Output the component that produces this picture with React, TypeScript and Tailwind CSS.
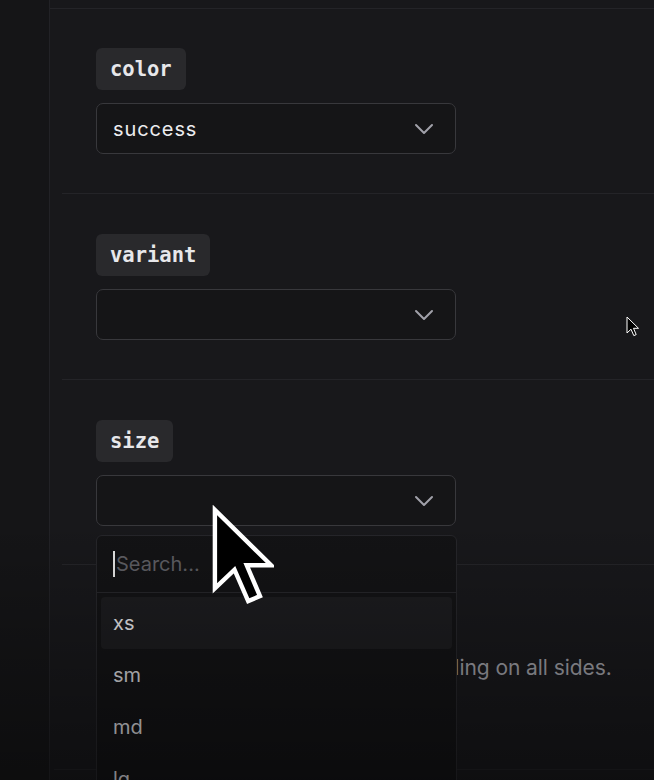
import React from "react";

const Chevron = () => (
  <svg width="20" height="12" viewBox="0 0 20 12" fill="none" className="shrink-0">
    <path d="M2 2 L10 10 L18 2" stroke="#a1a1aa" strokeWidth="2" strokeLinecap="round" strokeLinejoin="round" />
  </svg>
);

const Label = ({ children }: { children: React.ReactNode }) => (
  <div className="self-start h-[42px] px-[14px] flex items-center rounded-[6px] bg-[#29292c] text-[#e7e7ea] text-[20.5px] font-bold" style={{ fontFamily: '"DejaVu Sans Mono", monospace' }}>
    {children}
  </div>
);

const Select = ({ value }: { value?: string }) => (
  <div className="w-[360px] h-[51px] rounded-[7px] border border-[#38383c] bg-[#151517] flex items-center justify-between pl-[16px] pr-[21px]">
    <span className="text-[20px] text-[#ececef] tracking-[0.9px]">{value}</span>
    <Chevron />
  </div>
);

const Cursor = ({ scale, className }: { scale: number; className: string }) => (
  <svg width={13 * scale} height={21 * scale} viewBox="-1 -1 13 21" className={className}>
    <path
      d="M0 0 L0 16 L4 12.2 L6.8 18.6 L9.2 17.6 L6.5 11.3 L11.5 11.3 Z"
      fill="#000"
      stroke="#fff"
      strokeWidth={scale > 2 ? 0.9 : 1}
      strokeLinejoin="miter"
    />
  </svg>
);

export default function App() {
  return (
    <div className="w-[654px] h-[780px] relative overflow-hidden bg-[#18181b] flex" style={{ fontFamily: 'Inter, "Noto Sans", sans-serif' }}>
      <div className="w-[50px] shrink-0 bg-[#151517] border-r border-[#222226]" />
      <div className="flex-1 flex flex-col pt-[8px]">
        <div className="flex-1 border-t border-[#242428] flex flex-col">
          <div className="ml-[12px] pl-[34px] pt-[39px] pb-[39px] flex flex-col gap-[13px] border-b border-[#242428]">
            <Label>color</Label>
            <Select value="success" />
          </div>
          <div className="ml-[12px] pl-[34px] pt-[40px] pb-[39px] flex flex-col gap-[13px] border-b border-[#242428]">
            <Label>variant</Label>
            <Select />
          </div>
          <div className="ml-[12px] pl-[34px] pt-[40px] pb-[38px] flex flex-col gap-[13px] border-b border-[#242428]">
            <Label>size</Label>
            <Select />
          </div>
          <div className="ml-[4px] pl-[44px] pt-[89px] h-[205px] flex flex-col border-b border-[#202024]">
            <p className="text-[21px] text-[#9d9da3] leading-[28px] tracking-[-0.07px] whitespace-nowrap">Controls the amount of internal padding on all sides.</p>
          </div>
        </div>
      </div>

      {/* dropdown popover */}
      <div className="absolute left-[96px] top-[535px] w-[361px] h-[260px] bg-[#131315] border border-[#26262a] rounded-t-[6px] flex flex-col">
        <div className="h-[57px] shrink-0 flex items-center pl-[16px] border-b border-[#26262a]">
          <span className="w-[2px] h-[26px] bg-[#e5e5e5] mr-[1px]" />
          <span className="text-[20px] text-[#5e5e63]">Search...</span>
        </div>
        <div className="p-[4px] flex flex-col">
          <div className="h-[52px] px-[12px] flex items-center rounded-[4px] bg-[#1c1c1f] text-[20px] text-[#e4e4e7]">xs</div>
          <div className="h-[52px] px-[12px] flex items-center text-[20px] text-[#d4d4d8]">sm</div>
          <div className="h-[52px] px-[12px] flex items-center text-[20px] text-[#d4d4d8]">md</div>
          <div className="h-[52px] px-[12px] flex items-center text-[20px] text-[#d4d4d8]">lg</div>
        </div>
      </div>

      {/* bottom vignette */}
      <div className="absolute inset-x-0 bottom-0 h-[260px] pointer-events-none bg-gradient-to-b from-transparent to-[#000000]/40" />

      {/* cursors */}
      <Cursor scale={4.9} className="absolute left-[210px] top-[505px]" />
      <Cursor scale={1} className="absolute left-[626px] top-[316px]" />
    </div>
  );
}
